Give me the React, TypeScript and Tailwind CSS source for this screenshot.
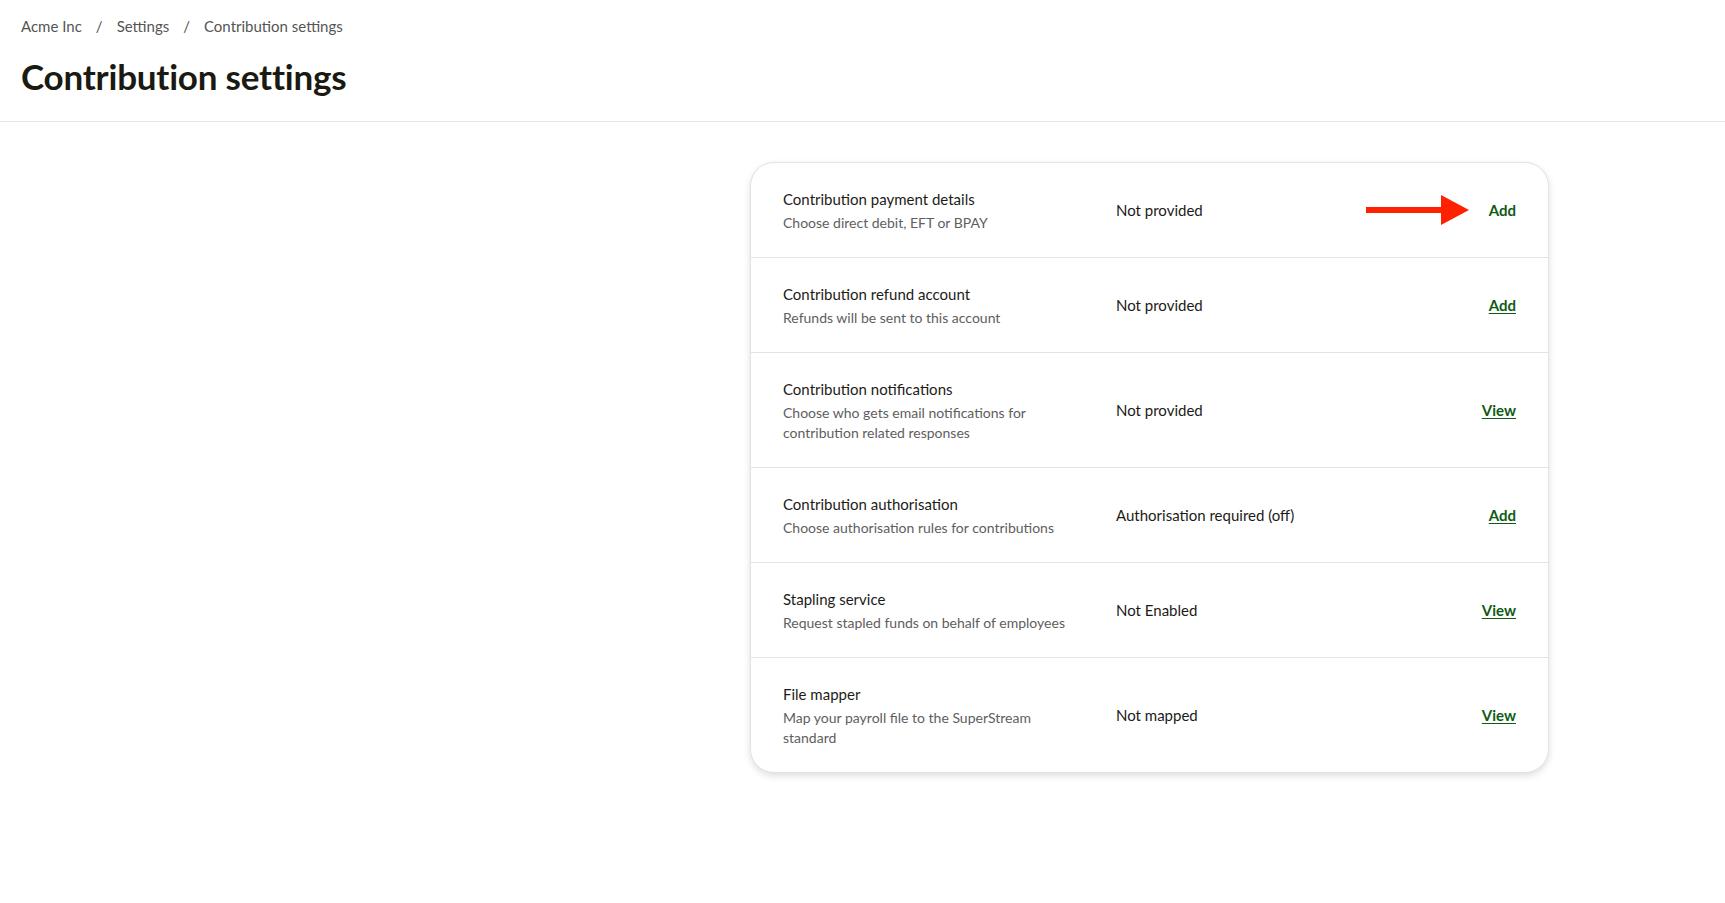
import React from "react";

type Row = {
  title: string;
  desc: string;
  value: string;
  action: string;
  underline: boolean;
  arrow?: boolean;
};

const rows: Row[] = [
  { title: "Contribution payment details", desc: "Choose direct debit, EFT or BPAY", value: "Not provided", action: "Add", underline: false, arrow: true },
  { title: "Contribution refund account", desc: "Refunds will be sent to this account", value: "Not provided", action: "Add", underline: true },
  { title: "Contribution notifications", desc: "Choose who gets email notifications for contribution related responses", value: "Not provided", action: "View", underline: true },
  { title: "Contribution authorisation", desc: "Choose authorisation rules for contributions", value: "Authorisation required (off)", action: "Add", underline: true },
  { title: "Stapling service", desc: "Request stapled funds on behalf of employees", value: "Not Enabled", action: "View", underline: true },
  { title: "File mapper", desc: "Map your payroll file to the SuperStream standard", value: "Not mapped", action: "View", underline: true },
];

function Arrow() {
  return (
    <svg width="103" height="30" viewBox="0 0 103 30" className="absolute right-full top-1/2 mr-5 -translate-y-1/2">
      <rect x="0" y="12" width="77" height="6" fill="#ff2200" />
      <polygon points="75,0 103,15 75,30" fill="#ff2200" />
    </svg>
  );
}

export default function App() {
  return (
    <div className="min-h-screen bg-white text-[#1c1c17]" style={{ fontFamily: "Lato, 'Noto Sans', sans-serif" }}>
      <header className="border-b border-[#e4e4e4] px-[21px] pt-[15px] pb-[21px]">
        <nav className="flex items-center text-[15px] leading-[22px] text-[#555555]">
          <span>Acme Inc</span>
          <span className="mx-[14px]">/</span>
          <span>Settings</span>
          <span className="mx-[14px]">/</span>
          <span>Contribution settings</span>
        </nav>
        <h1 className="mt-[15px] text-[35px] font-bold leading-[48px] tracking-[-0.2px] text-[#1a1a12]">
          Contribution settings
        </h1>
      </header>
      <main className="pt-[40px] pl-[750px]">
        <div className="w-[799px] overflow-hidden rounded-3xl border border-[#e2e2e2] bg-white shadow-[0_3px_7px_rgba(0,0,0,0.13)]">
          {rows.map((r, i) => (
            <div
              key={r.title}
              className={`grid grid-cols-[333px_1fr_auto] items-center px-8 py-6 ${i > 0 ? "border-t border-[#e4e4e4]" : ""}`}
            >
              <div className="max-w-[295px]">
                <div className="text-[15px] leading-6 text-[#1c1c17]">{r.title}</div>
                <div className="mt-[2px] text-[14px] leading-5 text-[#5e5e5e]">{r.desc}</div>
              </div>
              <div className="text-[15px] leading-6 text-[#1c1c17]">{r.value}</div>
              <div className="relative">
                {r.arrow && <Arrow />}
                <a
                  href="#"
                  className={`text-[15px] font-bold leading-6 text-[#0f5a14] ${r.underline ? "underline underline-offset-2" : "no-underline"}`}
                >
                  {r.action}
                </a>
              </div>
            </div>
          ))}
        </div>
      </main>
    </div>
  );
}
